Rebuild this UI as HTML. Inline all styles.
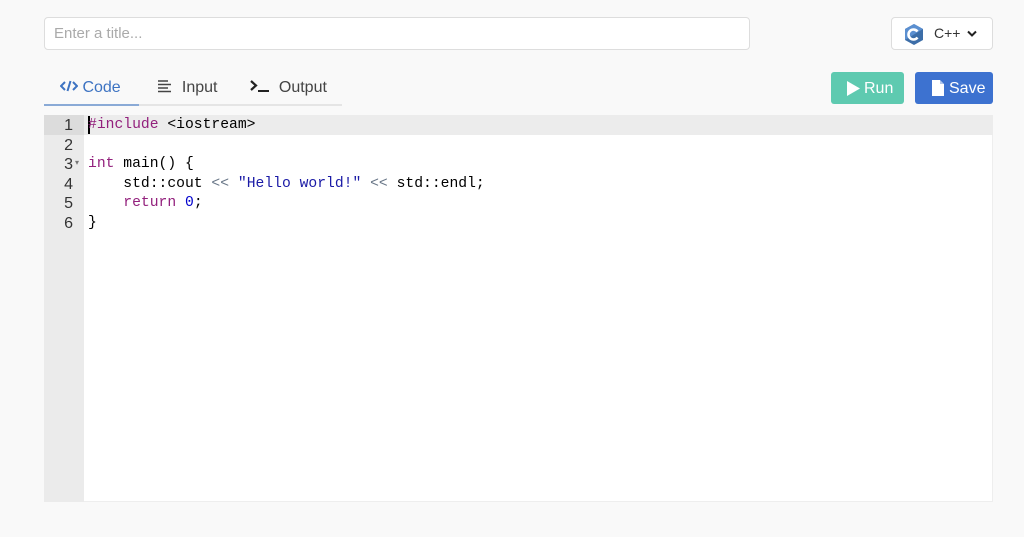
<!DOCTYPE html>
<html><head><meta charset="utf-8"><style>
body{margin:0;background:#f9f9f9;font-family:"Liberation Sans",sans-serif;width:1024px;height:537px;position:relative;overflow:hidden}
.abs{position:absolute;box-sizing:border-box}
.title{left:44px;top:17px;width:706px;height:33px;background:#fff;border:1px solid #ddd;border-radius:4px;color:#aaa;font-size:15px;line-height:31px;padding-left:9px}
.lang{left:891px;top:17px;width:102px;height:33px;background:#fff;border:1px solid #ddd;border-radius:4px;font-size:14px;line-height:31px;color:#333}
.tab{top:78px;font-size:16px;color:#444;height:20px;line-height:20px}
.btn{top:72px;height:32px;border-radius:3px;color:#fff;font-size:16px;line-height:33px}
.ed{left:44px;top:115px;width:949px;height:387px;background:#fff;border:1px solid #eee}
.gut{left:44px;top:115px;width:40px;height:387px;background:#ebebeb}
.code{font-family:"Liberation Mono",monospace;font-size:14.7px;line-height:19.5px;white-space:pre;color:#000}
.kw{color:#93217d}.str{color:#1a1aa6}.num{color:#0000cd}.op{color:#687687}
</style></head><body>
<div class="abs title">Enter a title...</div>
<div class="abs lang">
<svg style="position:absolute;left:12px;top:6px" width="20" height="21" viewBox="0 0 20 21"><polygon points="10,0 19,5 19,16 10,21 1,16 1,5" fill="#3d6ea8"/><polygon points="10,0 19,5 10,10.5 1,16 1,5" fill="#5b8fd0"/><path d="M13.5 7.5A5 5 0 1 0 13.5 13.5" stroke="#fff" stroke-width="2.6" fill="none"/></svg>
<span style="position:absolute;left:42px">C++</span>
<svg style="position:absolute;left:75px;top:12px" width="10" height="8"><path d="M1 1.5L5 5.5L9 1.5" stroke="#222" stroke-width="2" fill="none"/></svg>
</div>
<div class="abs tab" style="left:60px;top:78px;color:#3d73c2"><svg width="18" height="14" style="vertical-align:-1px"><path d="M5 3L1 7L5 11M13 3L17 7L13 11M10.5 2L7.5 12" stroke="#3d73c2" stroke-width="2" fill="none"/></svg> Code</div>
<div class="abs tab" style="left:157px"><svg width="16" height="14" style="vertical-align:-1px"><path d="M1 2H11M1 5.5H14M1 9H11M1 12.5H14" stroke="#444" stroke-width="1.5"/></svg> &nbsp;Input</div>
<div class="abs tab" style="left:250px"><svg width="20" height="14" style="vertical-align:-1px"><path d="M1 2L6 6.5L1 11" stroke="#222" stroke-width="2.2" fill="none"/><path d="M8 12H19" stroke="#222" stroke-width="2"/></svg> &nbsp;Output</div>
<div class="abs" style="left:44px;top:104px;width:298px;height:2px;background:#e5e5e5"></div>
<div class="abs" style="left:44px;top:104px;width:95px;height:2px;background:#8aaad6"></div>
<div class="abs btn" style="left:831px;width:73px;background:#5ecab0"><svg style="position:absolute;left:16px;top:9px" width="13" height="15"><path d="M0 0L13 7.5L0 15Z" fill="#fff"/></svg><span style="position:absolute;left:33px">Run</span></div>
<div class="abs btn" style="left:915px;width:78px;background:#3d72d0"><svg style="position:absolute;left:17px;top:8px" width="12" height="16"><path d="M0 0H8L12 4V16H0Z" fill="#fff"/><path d="M8 0V4H12" fill="#3d72d0" opacity=".4"/></svg><span style="position:absolute;left:34px">Save</span></div>
<div class="abs ed"></div>
<div class="abs gut"></div>
<div class="abs" style="left:84px;top:115px;width:909px;height:19.5px;background:#ececec"></div>
<div class="abs" style="left:44px;top:115px;width:40px;height:19.5px;background:#dcdcdc"></div>
<div class="abs code" style="left:44px;top:116px;width:29px;text-align:right;color:#333;font-family:'Liberation Sans',sans-serif;font-size:16px">1
2
3
4
5
6</div>
<div class="abs" style="left:75px;top:158px;font-size:8px;color:#777">▾</div>
<div class="abs" style="left:88px;top:116px;width:2px;height:18px;background:#000"></div>
<div class="abs code" style="left:88px;top:116px"><span class="kw">#include</span> &lt;iostream&gt;

<span class="kw">int</span> main() {
    std::cout <span class="op">&lt;&lt;</span> <span class="str">"Hello world!"</span> <span class="op">&lt;&lt;</span> std::endl;
    <span class="kw">return</span> <span class="num">0</span>;
}</div>
</body></html>
